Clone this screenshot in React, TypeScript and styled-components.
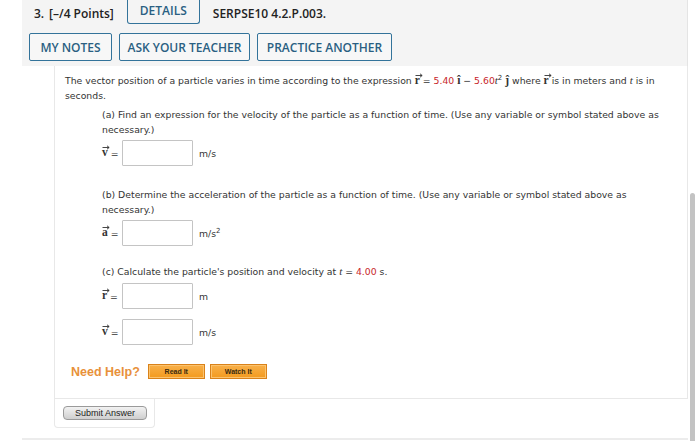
import React from "react";
import styled, { createGlobalStyle } from "styled-components";

const GlobalStyle = createGlobalStyle`
  html, body {
    margin: 0;
    padding: 0;
    background: #fff;
    overflow: hidden;
  }
  body {
    font-family: "DejaVu Sans", Verdana, sans-serif;
  }
`;

const Page = styled.div`
  width: 666px;
  margin-left: 22px;
`;

const Header = styled.div`
  background: #f4f4f4;
  border-right: 1px solid #e4e4e4;
  padding: 0 0 5px 7px;
  height: 61px;
`;

const TopRow = styled.div`
  display: flex;
  align-items: flex-start;
  height: 33px;
`;

const Number = styled.span`
  font-family: "Open Sans", sans-serif;
  font-weight: 600;
  font-size: 12px;
  color: #222;
  margin: 5px 0 0 5px;
  width: 10px;
`;

const Points = styled.span`
  font-family: "Open Sans", sans-serif;
  font-weight: 600;
  font-size: 12px;
  color: #222;
  margin: 5px 0 0 5px;
`;

const Tab = styled.div`
  margin: -2px 0 0 13px;
  height: 25px;
  padding: 0 12px;
  border: 1px solid #33739a;
  border-top: none;
  border-radius: 0 0 3px 3px;
  display: flex;
  align-items: center;
  font-family: "Open Sans", sans-serif;
  font-weight: 600;
  font-size: 12px;
  color: #2a5f82;
`;

const Code = styled.span`
  font-family: "Open Sans", sans-serif;
  font-weight: 600;
  font-size: 12px;
  color: #222;
  margin: 5px 0 0 13px;
`;

const ButtonRow = styled.div`
  display: flex;
  gap: 7px;
`;

const HeadButton = styled.button<{ $w: number }>`
  width: ${(p) => p.$w}px;
  height: 28px;
  background: #f7f7f7;
  border: 1px solid #33739a;
  border-radius: 2px;
  font-family: "Open Sans", sans-serif;
  font-weight: 600;
  font-size: 12px;
  color: #2a5f82;
  padding: 0;
`;

const Body = styled.div`
  padding-left: 32px;
`;

const Card = styled.div`
  border-left: 1px solid #e8e8e8;
  border-right: 1px solid #e8e8e8;
  border-bottom: 1px solid #e8e8e8;
  padding: 7px 18px 19px 10px;
`;

const Para = styled.p<{ $top?: number }>`
  margin: ${(p) => p.$top ?? 0}px 0 0 0;
  font-size: 9.3px;
  line-height: 15px;
  color: #333;
`;

const Part = styled.div`
  padding-left: 37px;
  margin-top: 4px;
`;

const Red = styled.span`
  color: #c8262b;
`;

const Ital = styled.i`
  font-family: "Liberation Serif", serif;
  font-size: 11px;
`;

const Sup = styled.sup`
  font-size: 7px;
  line-height: 0;
`;

const Unit = styled.span`
  font-size: 9.3px;
`;

const VecWrap = styled.span`
  position: relative;
  display: inline-block;
  line-height: 1;
  font-family: "Liberation Serif", serif;
  font-weight: bold;
  font-size: 11.5px;
  color: #333;
`;

const Arrow = styled.svg`
  position: absolute;
  left: 0;
  top: -2px;
`;

const Vec = ({ c }: { c: string }) => (
  <VecWrap>
    {c}
    <Arrow width="8" height="5" viewBox="0 0 8 5">
      <path d="M0.5 2.5 H7 M5 0.8 L7.2 2.5 L5 4.2" stroke="#333" strokeWidth="0.9" fill="none" />
    </Arrow>
  </VecWrap>
);

const Hat = styled.span`
  font-family: "Liberation Serif", serif;
  font-weight: bold;
  font-size: 11.5px;
  color: #333;
`;

const AnswerRow = styled.div<{ $top: number }>`
  display: flex;
  align-items: center;
  margin-top: ${(p) => p.$top}px;
  height: 26px;
  font-size: 9.3px;
  color: #333;
`;

const Label = styled.span`
  width: 20px;
  display: flex;
  align-items: center;
  gap: 3px;
`;

const Field = styled.input`
  width: 71px;
  height: 26px;
  box-sizing: border-box;
  border: 1px solid #c4c4c4;
  border-radius: 1px;
  margin: 0 6px 0 0;
  padding: 0;
`;

const Help = styled.div`
  display: flex;
  align-items: center;
  gap: 5px;
  margin: 19px 0 0 6px;
`;

const HelpText = styled.span`
  font-family: "Liberation Sans", Arial, sans-serif;
  font-weight: bold;
  font-size: 12.5px;
  color: #e8913a;
  margin-right: 3px;
`;

const OrangeButton = styled.button`
  width: 57px;
  height: 15px;
  padding: 0;
  background: linear-gradient(#f8b04a, #f39a1e);
  border: 1px solid #d9821a;
  box-shadow: inset 0 0 0 1px #fcc36e;
  font-family: "Liberation Sans", Arial, sans-serif;
  font-weight: bold;
  font-size: 7px;
  color: #3a2a10;
`;

const SubmitTab = styled.div`
  width: 101px;
  height: 29px;
  box-sizing: border-box;
  border: 1px solid #e8e8e8;
  border-top: none;
  border-radius: 0 0 4px 4px;
  display: flex;
  align-items: center;
  padding-left: 8px;
`;

const SubmitButton = styled.button`
  width: 84px;
  height: 14px;
  padding: 0;
  background: linear-gradient(#f2f2f2, #cfcfcf);
  border: 1px solid #9a9a9a;
  border-radius: 4px;
  font-family: "Liberation Sans", Arial, sans-serif;
  font-size: 9px;
  color: #222;
`;

const BottomRule = styled.div`
  margin-top: 10px;
  border-top: 2px solid #ececec;
`;

const Scrollbar = styled.div`
  position: fixed;
  right: 5px;
  top: 193px;
  width: 5px;
  height: 260px;
  background: #c3c3c3;
  border-radius: 3px;
`;

export default function App() {
  return (
    <>
      <GlobalStyle />
      <Page>
        <Header>
          <TopRow>
            <Number>3.</Number>
            <Points>[–/4 Points]</Points>
            <Tab>DETAILS</Tab>
            <Code>SERPSE10 4.2.P.003.</Code>
          </TopRow>
          <ButtonRow>
            <HeadButton $w={83}>MY NOTES</HeadButton>
            <HeadButton $w={131}>ASK YOUR TEACHER</HeadButton>
            <HeadButton $w={135}>PRACTICE ANOTHER</HeadButton>
          </ButtonRow>
        </Header>
        <Body>
          <Card>
            <Para>
              The vector position of a particle varies in time according to the expression <Vec c="r" /> ={" "}
              <Red>5.40</Red> <Hat>î</Hat> − <Red>5.60</Red>
              <Ital>t</Ital>
              <Sup>2</Sup> <Hat>ĵ</Hat> where <Vec c="r" /> is in meters and <Ital>t</Ital> is in
              <br />
              seconds.
            </Para>
            <Part>
              <Para>
                (a) Find an expression for the velocity of the particle as a function of time. (Use any variable or
                symbol stated above as necessary.)
              </Para>
              <AnswerRow $top={3}>
                <Label>
                  <Vec c="v" /> =
                </Label>
                <Field />
                <Unit>m/s</Unit>
              </AnswerRow>
              <Para $top={21}>
                (b) Determine the acceleration of the particle as a function of time. (Use any variable or symbol
                stated above as necessary.)
              </Para>
              <AnswerRow $top={3}>
                <Label>
                  <Vec c="a" /> =
                </Label>
                <Field />
                <Unit>
                  m/s<Sup>2</Sup>
                </Unit>
              </AnswerRow>
              <Para $top={18}>
                (c) Calculate the particle's position and velocity at <Ital>t</Ital> = <Red>4.00</Red> s.
              </Para>
              <AnswerRow $top={4}>
                <Label>
                  <Vec c="r" /> =
                </Label>
                <Field />
                <Unit>m</Unit>
              </AnswerRow>
              <AnswerRow $top={10}>
                <Label>
                  <Vec c="v" /> =
                </Label>
                <Field />
                <Unit>m/s</Unit>
              </AnswerRow>
            </Part>
            <Help>
              <HelpText>Need Help?</HelpText>
              <OrangeButton>Read It</OrangeButton>
              <OrangeButton>Watch It</OrangeButton>
            </Help>
          </Card>
          <SubmitTab>
            <SubmitButton>Submit Answer</SubmitButton>
          </SubmitTab>
        </Body>
        <BottomRule />
      </Page>
      <Scrollbar />
    </>
  );
}
